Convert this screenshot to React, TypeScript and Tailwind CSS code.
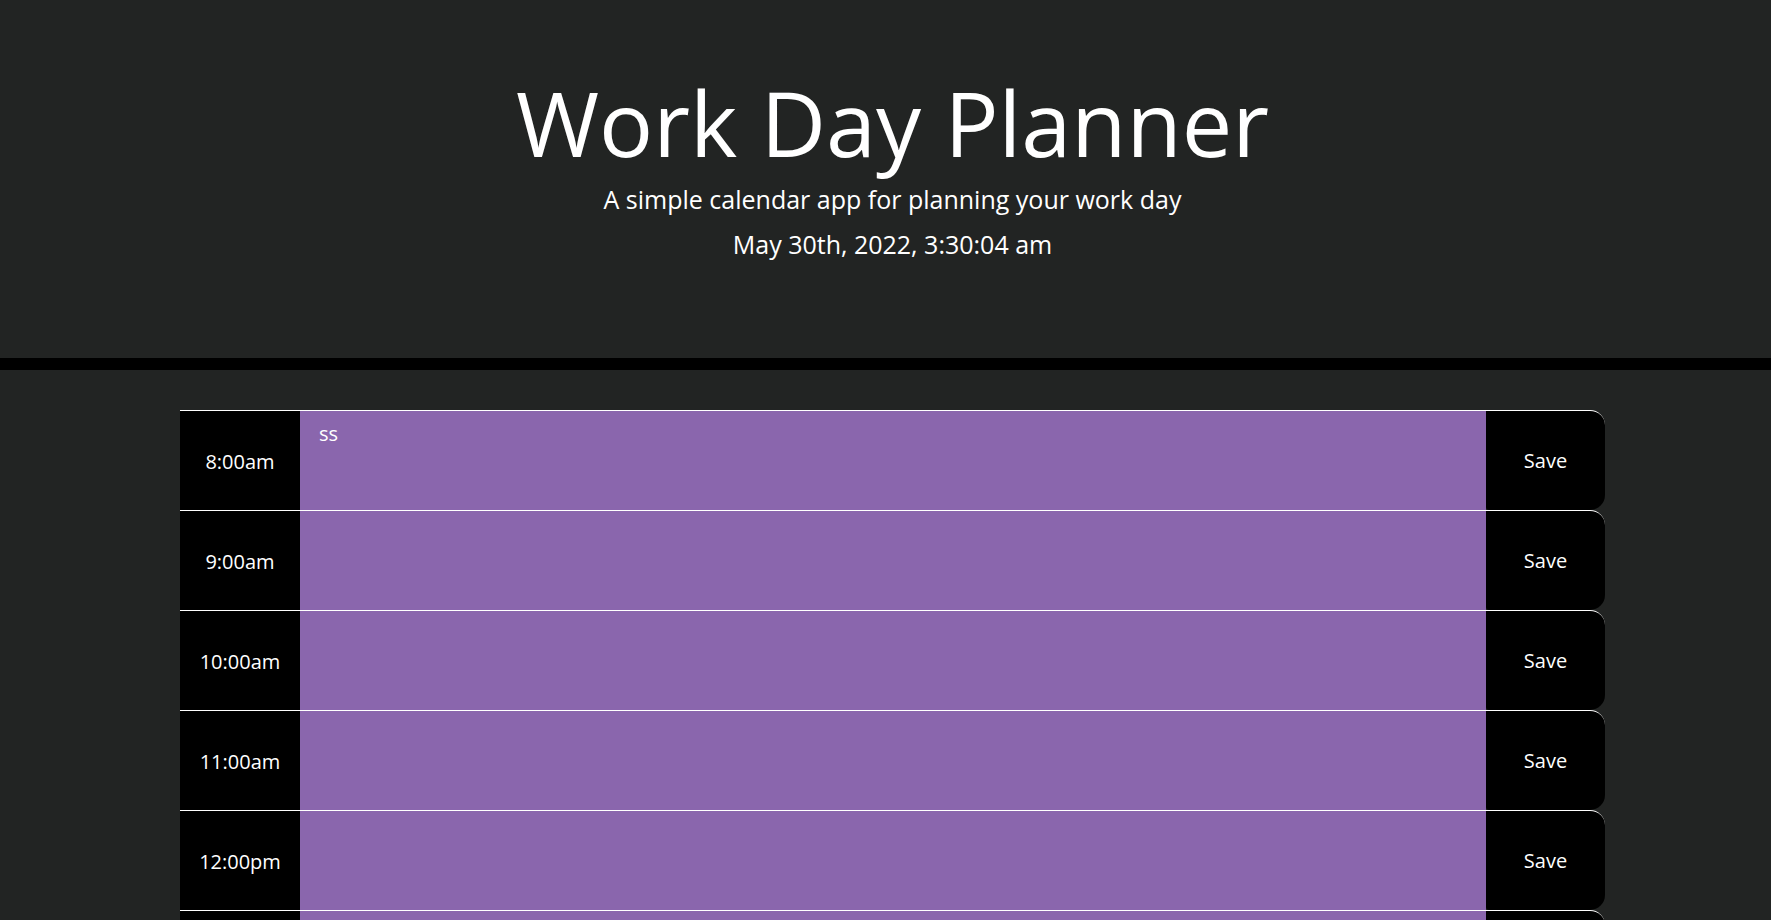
const hours = [
  '8:00am',
  '9:00am',
  '10:00am',
  '11:00am',
  '12:00pm',
  '1:00pm',
  '2:00pm',
  '3:00pm',
  '4:00pm',
  '5:00pm',
]

function TimeBlock({ hour, text }: { hour: string; text: string }) {
  return (
    <div className="flex h-[100px]">
      <div className="flex w-[120px] items-center justify-center border-t border-t-white bg-black pt-[2px] text-[20px] text-white">
        {hour}
      </div>
      <textarea
        defaultValue={text}
        className="flex-1 resize-none border-t border-t-white bg-[#8a66ad] px-[19px] pt-[8px] text-[20px] leading-[30px] text-white outline-none"
      />
      <button className="flex w-[119px] items-center justify-center rounded-bl-[3px] rounded-r-[15px] border-t border-t-white bg-black text-[20px] text-white">
        Save
      </button>
    </div>
  )
}

export default function App() {
  return (
    <div className="min-h-screen bg-[#222423] font-['Open_Sans',sans-serif]">
      <header className="border-b-[12px] border-black pt-[68px] pb-[96px] pl-[14px] text-center text-white">
        <h1 className="text-[90px] leading-[108px] font-normal">Work Day Planner</h1>
        <p className="mt-[5px] text-[25px] leading-[36px]">
          A simple calendar app for planning your work day
        </p>
        <p className="mt-[9px] text-[25px] leading-[36px]">May 30th, 2022, 3:30:04 am</p>
      </header>
      <main className="ml-[180px] w-[1425px] pt-[40px] pb-[40px]">
        {hours.map((h, i) => (
          <TimeBlock key={h} hour={h} text={i === 0 ? 'ss' : ''} />
        ))}
      </main>
    </div>
  )
}
